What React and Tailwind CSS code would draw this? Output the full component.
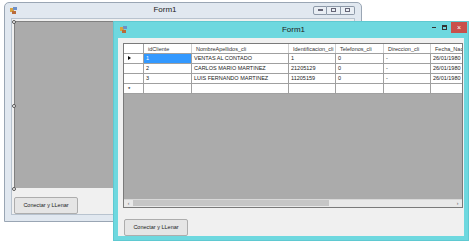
import React from 'react';

const cols = [
  { key: 'id', label: 'idCliente', w: 'w-[48px]' },
  { key: 'nom', label: 'NombreApellidos_cli', w: 'w-[97px]' },
  { key: 'ide', label: 'Identificacion_cli', w: 'w-[47px]' },
  { key: 'tel', label: 'Telefonos_cli', w: 'w-[48px]' },
  { key: 'dir', label: 'Direccion_cli', w: 'w-[47px]' },
  { key: 'fec', label: 'Fecha_Naci', w: 'w-[40px]' },
];

const rows = [
  { id: '1', nom: 'VENTAS AL CONTADO', ide: '1', tel: '0', dir: '-', fec: '26/01/1980' },
  { id: '2', nom: 'CARLOS MARIO MARTINEZ', ide: '21205129', tel: '0', dir: '-', fec: '26/01/1980' },
  { id: '3', nom: 'LUIS FERNANDO MARTINEZ', ide: '11205159', tel: '0', dir: '-', fec: '26/01/1980' },
];

function AppIcon() {
  return (
    <svg width="7" height="7" viewBox="0 0 7 7">
      <rect x="0" y="1" width="4" height="4" fill="#d9a441" />
      <rect x="3" y="0" width="4" height="3" fill="#6d8fc7" />
      <rect x="2" y="4" width="4" height="3" fill="#b96b3a" />
    </svg>
  );
}

function Handle() {
  return <div className="absolute w-[4px] h-[4px] rounded-full border border-[#555] bg-white" />;
}

function WinButton({ children }) {
  return (
    <button className="w-[64px] h-[17px] border border-[#adadad] bg-[#e5e5e5] text-[5.5px] text-[#222] leading-none rounded-[2px] whitespace-nowrap">
      {children}
    </button>
  );
}

function Grid() {
  return (
    <div className="relative w-[340px] h-[165px] border border-[#7a7a7a] bg-[#ababab] overflow-hidden flex flex-col">
      <div className="flex-1 overflow-hidden">
        <div className="flex h-[10px] bg-white border-b border-[#a0a0a0]">
          <div className="w-[20px] shrink-0 border-r border-[#a0a0a0]" />
          {cols.map(c => (
            <div key={c.key} className={`${c.w} shrink-0 border-r border-[#d0d0d0] px-[4px] text-[5.5px] leading-[10px] text-[#333] whitespace-nowrap`}>
              {c.label}
            </div>
          ))}
        </div>
        {rows.map((r, i) => (
          <div key={r.id} className="flex h-[10px] bg-white border-b border-[#a0a0a0]">
            <div className="w-[20px] shrink-0 border-r border-[#a0a0a0] flex items-center pl-[4px]">
              {i === 0 && <span className="w-0 h-0 border-y-[2px] border-y-transparent border-l-[3px] border-l-black" />}
            </div>
            {cols.map(c => (
              <div
                key={c.key}
                className={`${c.w} shrink-0 border-r border-[#a0a0a0] px-[2px] text-[5.5px] leading-[9px] whitespace-nowrap ${i === 0 && c.key === 'id' ? 'bg-[#3399ff] text-white' : 'text-[#222]'}`}
              >
                {r[c.key]}
              </div>
            ))}
          </div>
        ))}
        <div className="flex h-[10px] bg-white border-b border-[#a0a0a0]">
          <div className="w-[20px] shrink-0 border-r border-[#a0a0a0] pl-[4px] text-[6px] leading-[10px]">*</div>
          {cols.map(c => (
            <div key={c.key} className={`${c.w} shrink-0 border-r border-[#a0a0a0]`} />
          ))}
        </div>
      </div>
      <div className="h-[8px] bg-[#e9e9e9] border-t border-[#d8d8d8] flex items-center">
        <span className="w-[9px] text-center text-[5px] leading-none text-[#555]">‹</span>
        <div className="w-[196px] h-[6px] bg-[#c6c6c6]" />
        <div className="flex-1" />
        <span className="w-[9px] text-center text-[5px] leading-none text-[#555]">›</span>
      </div>
    </div>
  );
}

export default function App() {
  return (
    <div className="relative w-[474px] h-[244px] overflow-hidden bg-white" style={{ fontFamily: '"Liberation Sans", Arial, sans-serif' }}>
      {/* back window */}
      <div className="absolute left-[4px] top-[2px] w-[358px] h-[220px] rounded-t-[5px] border border-[#9aa6b4] bg-[#e1e8f0] flex flex-col">
        <div className="h-[17px] flex items-center pl-[5px] pr-[6px]">
          <AppIcon />
          <div className="flex-1 text-center text-[8px] text-[#222]">Form1</div>
          <div className="flex">
            <div className="w-[14px] h-[9px] border border-[#8d99a8] bg-[#e9eef4] rounded-l-[2px] flex items-center justify-center">
              <div className="w-[5px] h-[2px] border border-[#667]" />
            </div>
            <div className="w-[14px] h-[9px] border-y border-r border-[#8d99a8] bg-[#e9eef4] flex items-center justify-center">
              <div className="w-[5px] h-[4px] border border-[#667]" />
            </div>
            <div className="w-[14px] h-[9px] border-y border-r border-[#8d99a8] bg-[#e9eef4] rounded-r-[2px] flex items-center justify-center">
              <div className="w-[5px] h-[4px] border border-[#667]" />
            </div>
          </div>
        </div>
        <div className="flex-1 mx-[6px] mb-[6px] bg-[#f0f0f0] border border-[#b8c3cf] relative">
          <div className="absolute left-0 top-[1px]"><Handle /></div>
          <div className="absolute left-0 top-[85px]"><Handle /></div>
          <div className="absolute left-0 top-[168px]"><Handle /></div>
          <div className="ml-[2px] mt-[2px] w-[340px] h-[167px] bg-[#ababab] border-l border-t border-[#808080]" />
          <div className="ml-[2px] mt-[2px]">
            <WinButton>Conectar y LLenar</WinButton>
          </div>
        </div>
      </div>

      {/* front window */}
      <div className="absolute left-[113px] top-[21px] w-[356px] h-[220px] bg-[#6ed8df] border border-[#5fc9d1] flex flex-col">
        <div className="h-[16px] flex items-center pl-[6px] relative">
          <AppIcon />
          <div className="flex-1 text-center text-[8px] text-[#222] pl-[32px]">Form1</div>
          <div className="flex items-start self-start h-[11px]">
            <div className="w-[11px] flex justify-center pt-[5px]"><div className="w-[4px] h-[1px] bg-[#333]" /></div>
            <div className="w-[11px] flex justify-center pt-[3px]"><div className="w-[5px] h-[5px] border border-[#333] border-t-2" /></div>
            <div className="w-[16px] h-[11px] ml-[1px] mr-[1px] bg-[#c9504b] text-white text-[7px] leading-[11px] text-center">×</div>
          </div>
        </div>
        <div className="flex-1 mx-[4px] mb-[4px] bg-[#f0f0f0] flex flex-col pl-[5px] pt-[5px]">
          <Grid />
          <div className="mt-[4px] ml-[1px]">
            <WinButton>Conectar y LLenar</WinButton>
          </div>
        </div>
      </div>
    </div>
  );
}
